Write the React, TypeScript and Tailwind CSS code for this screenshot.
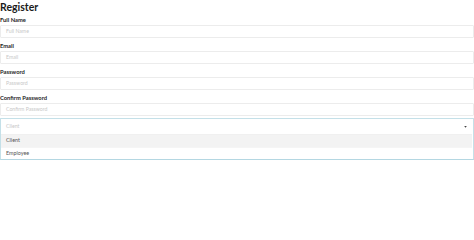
import React from "react";

const font = { fontFamily: "Lato, 'Noto Sans', sans-serif" };

function Field({ label, placeholder }: { label: string; placeholder: string }) {
  return (
    <div className="flex flex-col">
      <div className="h-[11px] flex items-end text-[5.8px] font-bold text-[#1e1e1e] leading-none pb-[2px]">{label}</div>
      <div className="h-[13px] border border-[#ececec] rounded-[1px] flex items-center pl-[5px] text-[5.2px] text-[#c8c8c8] leading-none">
        {placeholder}
      </div>
    </div>
  );
}

export default function App() {
  return (
    <div className="w-[474px] h-[208px] bg-white" style={font}>
      <div className="h-[14px] flex items-center pt-[1px] text-[10.5px] font-bold text-[#1b1b1b] leading-none">Register</div>
      <div className="flex flex-col gap-[2px]">
        <Field label="Full Name" placeholder="Full Name" />
        <Field label="Email" placeholder="Email" />
        <Field label="Password" placeholder="Password" />
        <Field label="Confirm Password" placeholder="Confirm Password" />
      </div>
      <div className="mt-[2px] w-[474px]">
        <div className="h-[16px] border border-[#c4e0e8] border-b-0 rounded-t-[1px] flex items-center justify-between pl-[5px] pr-[6px] text-[5.2px] text-[#c8c8c8] leading-none">
          <span>Client</span>
          <svg width="3" height="2" viewBox="0 0 4 3"><polygon points="0,0 4,0 2,2.5" fill="#444" /></svg>
        </div>
        <div className="border border-t-0 border-[#c4e0e8] border-b-[1.5px] border-b-[#b4d7e2]">
          <div className="h-[13px] mr-[1px] bg-[#f3f3f3] border-t border-[#f0f0f0] flex items-center pl-[5px] text-[5.4px] text-[#555] leading-none">Client</div>
          <div className="h-[12px] mr-[1px] border-t border-[#f5f5f5] flex items-center pl-[5px] text-[5.4px] text-[#555] leading-none">Employee</div>
        </div>
      </div>
    </div>
  );
}
